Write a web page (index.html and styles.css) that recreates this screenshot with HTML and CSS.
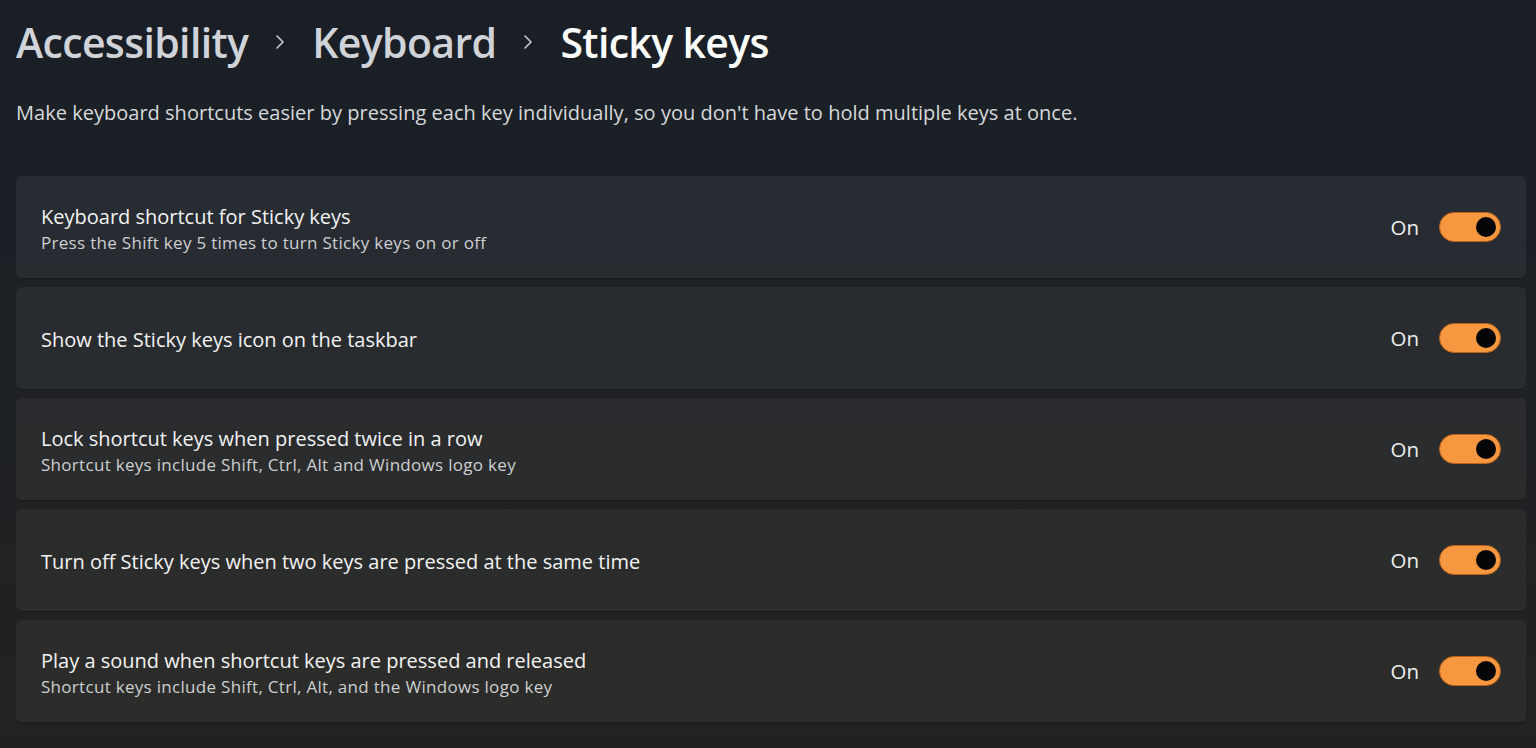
FILE: index.html
```html
<!DOCTYPE html>
<html>
<head>
<meta charset="utf-8">
<link rel="stylesheet" href="styles.css">
</head>
<body>
<div class="page">
  <h1 class="crumbs">
    <span class="crumb">Accessibility</span>
    <span class="sep"><svg viewBox="0 0 12 20" width="12" height="20"><path d="M3 4 L9 10 L3 16" fill="none" stroke="currentColor" stroke-width="1.6" stroke-linecap="round" stroke-linejoin="round"/></svg></span>
    <span class="crumb">Keyboard</span>
    <span class="sep"><svg viewBox="0 0 12 20" width="12" height="20"><path d="M3 4 L9 10 L3 16" fill="none" stroke="currentColor" stroke-width="1.6" stroke-linecap="round" stroke-linejoin="round"/></svg></span>
    <span class="crumb current">Sticky keys</span>
  </h1>
  <p class="desc">Make keyboard shortcuts easier by pressing each key individually, so you don't have to hold multiple keys at once.</p>
  <div class="list">
    <div class="card c1">
      <div class="text">
        <div class="title">Keyboard shortcut for Sticky keys</div>
        <div class="sub">Press the Shift key 5 times to turn Sticky keys on or off</div>
      </div>
      <div class="ctrl"><span class="state">On</span><span class="toggle"><span class="knob"></span></span></div>
    </div>
    <div class="card c2">
      <div class="text">
        <div class="title">Show the Sticky keys icon on the taskbar</div>
      </div>
      <div class="ctrl"><span class="state">On</span><span class="toggle"><span class="knob"></span></span></div>
    </div>
    <div class="card c3">
      <div class="text">
        <div class="title">Lock shortcut keys when pressed twice in a row</div>
        <div class="sub">Shortcut keys include Shift, Ctrl, Alt and Windows logo key</div>
      </div>
      <div class="ctrl"><span class="state">On</span><span class="toggle"><span class="knob"></span></span></div>
    </div>
    <div class="card c4">
      <div class="text">
        <div class="title">Turn off Sticky keys when two keys are pressed at the same time</div>
      </div>
      <div class="ctrl"><span class="state">On</span><span class="toggle"><span class="knob"></span></span></div>
    </div>
    <div class="card c5">
      <div class="text">
        <div class="title">Play a sound when shortcut keys are pressed and released</div>
        <div class="sub">Shortcut keys include Shift, Ctrl, Alt, and the Windows logo key</div>
      </div>
      <div class="ctrl"><span class="state">On</span><span class="toggle"><span class="knob"></span></span></div>
    </div>
  </div>
</div>
</body>
</html>
```

FILE: styles.css
```css
html, body {
  margin: 0;
  padding: 0;
  height: 100%;
}
body {
  background: linear-gradient(180deg, #1a1f27 0%, #1d2126 40%, #212220 100%);
  font-family: "Open Sans", "Noto Sans", sans-serif;
  color: #ffffff;
  overflow: hidden;
}
.page {
  padding: 14px 10px 0 16px;
}
.crumbs {
  margin: 0;
  display: flex;
  align-items: center;
  gap: 0;
  font-size: 41px;
  font-weight: 600;
  line-height: 56px;
  letter-spacing: -0.65px;
}
.crumb {
  color: #d0d3d8;
}
.crumb.current {
  color: #ffffff;
}
.sep {
  display: flex;
  align-items: center;
  color: #c9ccd0;
  width: 64px;
  justify-content: center;
}
.desc {
  margin: 30px 0 0 0;
  font-size: 20px;
  line-height: 26px;
  color: #d6d8da;
  letter-spacing: 0.02px;
}
.list {
  margin-top: 50px;
  display: flex;
  flex-direction: column;
  gap: 9px;
}
.card {
  height: 102px;
  box-sizing: border-box;
  border-radius: 6px;
  display: flex;
  align-items: center;
  justify-content: space-between;
  padding: 0 25px 0 25px;
  box-shadow: 0 1px 0 rgba(0,0,0,0.25);
}
.c1 { background: linear-gradient(180deg, #272c34, #282b30); }
.c2 { background: linear-gradient(180deg, #282b30, #292c2e); }
.c3 { background: linear-gradient(180deg, #292b2e, #2a2c2c); }
.c4 { background: linear-gradient(180deg, #2a2c2c, #2b2c2b); }
.c5 { background: linear-gradient(180deg, #2b2c2b, #2c2d2a); }
.text {
  display: flex;
  flex-direction: column;
  padding-top: 4px;
}
.title {
  font-size: 20px;
  line-height: 26px;
  color: #f3f3f3;
  letter-spacing: 0;
}
.sub {
  font-size: 17px;
  line-height: 24px;
  margin-top: 1px;
  color: #cdcfd1;
  letter-spacing: 0.3px;
}
.ctrl {
  display: flex;
  align-items: center;
  gap: 20px;
}
.state {
  font-size: 20.5px;
  color: #eeeeee;
  padding-left: 2px;
}
.toggle {
  width: 62px;
  height: 30px;
  box-sizing: border-box;
  border-radius: 15px;
  background: #f7973f;
  border: 1px solid #b8621c;
  display: flex;
  align-items: center;
  justify-content: flex-end;
  padding-right: 4px;
}
.knob {
  width: 20px;
  height: 20px;
  border-radius: 50%;
  background: #050505;
}
```
